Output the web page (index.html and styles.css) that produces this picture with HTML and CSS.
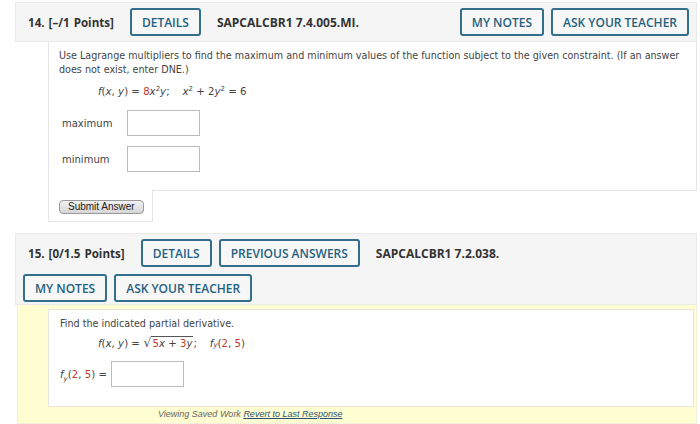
FILE: index.html
```html
<!DOCTYPE html>
<html>
<head>
<meta charset="utf-8">
<link rel="stylesheet" href="styles.css">
</head>
<body>
<div class="page">
  <section class="q q14">
    <div class="qhead">
      <span class="qtitle">14. [–/1 Points]</span>
      <span class="btn">DETAILS</span>
      <span class="qcode">SAPCALCBR1 7.4.005.MI.</span>
      <span class="btn push">MY NOTES</span>
      <span class="btn">ASK YOUR TEACHER</span>
    </div>
    <div class="qbody">
      <p class="prompt">Use Lagrange multipliers to find the maximum and minimum values of the function subject to the given constraint. (If an answer does not exist, enter DNE.)</p>
      <p class="formula"><i>f</i>(<i>x</i>, <i>y</i>) = <span class="red">8</span><i>x</i><sup>2</sup><i>y</i>;&nbsp;&nbsp;&nbsp; <i>x</i><sup>2</sup> + 2<i>y</i><sup>2</sup> = 6</p>
      <div class="answers">
        <div class="arow"><span class="alabel">maximum</span><span class="abox"></span></div>
        <div class="arow"><span class="alabel">minimum</span><span class="abox"></span></div>
      </div>
    </div>
    <div class="submit-tab"><span class="submit">Submit Answer</span></div>
  </section>

  <section class="q q15">
    <div class="qhead col">
      <div class="hrow">
        <span class="qtitle">15. [0/1.5 Points]</span>
        <span class="btn">DETAILS</span>
        <span class="btn">PREVIOUS ANSWERS</span>
        <span class="qcode">SAPCALCBR1 7.2.038.</span>
      </div>
      <div class="hrow">
        <span class="btn">MY NOTES</span>
        <span class="btn">ASK YOUR TEACHER</span>
      </div>
    </div>
    <div class="saved">
      <div class="qbody2">
        <p class="prompt">Find the indicated partial derivative.</p>
        <p class="formula2"><i>f</i>(<i>x</i>, <i>y</i>) = <span class="sqrt"><span class="rad">√</span><span class="under"><span class="red">5</span><i>x</i> + <span class="red">3</span><i>y</i></span></span>;&nbsp;&nbsp;&nbsp; <i>f</i><sub><i>y</i></sub>(<span class="red">2</span>, <span class="red">5</span>)</p>
        <div class="arow2"><span class="alabel2"><i>f</i><sub><i>y</i></sub>(<span class="red">2</span>, <span class="red">5</span>) =</span><span class="abox"></span></div>
      </div>
      <div class="savednote">Viewing Saved Work <span class="revert">Revert to Last Response</span></div>
    </div>
  </section>
</div>
</body>
</html>
```

FILE: styles.css
```css
* { box-sizing: border-box; }
html, body { margin: 0; padding: 0; background: #fff; }
body { font-family: "DejaVu Sans", Verdana, sans-serif; color: #444; }
.page { padding: 2px 3px 0 15px; width: 700px; }

.q14 { margin-bottom: 11px; }

.qhead {
  display: flex;
  align-items: center;
  background: #f5f5f5;
  border: 1px solid #e9e9e9;
  padding: 5px 7px 5px 7px;
  font-family: "Open Sans", sans-serif;
  font-size: 12px;
}
.qhead.col { flex-direction: column; align-items: stretch; gap: 7px; padding-bottom: 2px; }
.hrow { display: flex; align-items: center; }
.qtitle { font-weight: 700; color: #333; margin: 0 16px 0 5px; font-size: 11.6px; word-spacing: 1px; }
.qcode { font-weight: 700; color: #333; margin: 0 10px 0 9px; }
.btn {
  display: inline-flex;
  align-items: center;
  height: 28px;
  padding: 0 10px;
  border: 2px solid #336f8b;
  border-radius: 3px;
  color: #25617f;
  font-weight: 600;
  margin-right: 7px;
  background: #f7f7f7;
}
.push { margin-left: auto; }
.qhead > .btn:last-child { margin-right: 0; }

.qbody {
  margin-left: 33px;
  border: 1px solid #e6e6e6;
  border-top: none;
  padding: 7px 10px 18px 10px;
  background: #fff;
  font-size: 9.6px;
}
.prompt { margin: 0; line-height: 14px; color: #444; }
.formula { margin: 8px 0 0 39px; line-height: 14px; color: #444; font-size: 10.2px; }
.formula i, .formula2 i, .alabel2 i { font-style: italic; }
sup { font-size: 7px; vertical-align: 4px; line-height: 0; }
sub { font-size: 7px; vertical-align: -3px; line-height: 0; }
.red { color: #c0392b; }

.answers { margin-top: 11px; display: flex; flex-direction: column; gap: 10px; }
.arow { display: flex; align-items: center; }
.alabel { width: 68px; padding-left: 3px; font-size: 10px; color: #444; }
.abox { display: inline-block; width: 73px; height: 26px; border: 1px solid #bbb; background: #fff; }

.submit-tab {
  display: flex;
  margin-left: 33px;
  margin-top: -1px;
  width: 105px;
  background: #fff;
  border: 1px solid #e6e6e6;
  border-top: none;
  padding: 10px 0 7px 10px;
}
.submit {
  display: block;
  font-family: "Liberation Sans", Arial, sans-serif;
  font-size: 10px;
  line-height: 12px;
  padding: 0 8px;
  border: 1px solid #999;
  border-radius: 4px;
  background: linear-gradient(#f2f2f2, #d6d6d6);
  color: #222;
}

.saved {
  margin-left: 2px;
  background: #fefed2;
  border: 1px solid #f1f1dc;
  border-top: none;
  padding: 4px 2px 2px 30px;
}
.qbody2 {
  background: #fff;
  border: 1px solid #e6e6dc;
  padding: 7px 10px 19px 11px;
  font-size: 9.6px;
}
.formula2 { margin: 4px 0 0 38px; line-height: 16px; color: #444; display: flex; align-items: baseline; white-space: pre; font-size: 10.2px; }
.sqrt { display: inline-flex; align-items: baseline; }
.rad { font-size: 13px; color: #555; }
.under { border-top: 1px solid #555; padding: 1px 1px 0 1px; line-height: 12px; }
.arow2 { display: flex; align-items: center; margin-top: 9px; font-size: 10.2px; }
.alabel2 { margin-right: 4px; }
.arow2 .abox { width: 73px; }
.savednote {
  padding: 2px 0 0 110px;
  font-family: "Liberation Sans", Arial, sans-serif;
  font-style: italic;
  font-size: 9px;
  color: #666;
  height: 14px;
}
.revert { color: #2c4f73; text-decoration: underline; }
```
